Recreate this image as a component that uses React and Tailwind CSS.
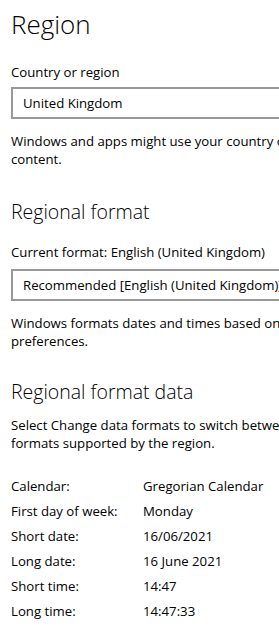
export default function App() {
  const rows = [
    ["Calendar:", "Gregorian Calendar"],
    ["First day of week:", "Monday"],
    ["Short date:", "16/06/2021"],
    ["Long date:", "16 June 2021"],
    ["Short time:", "14:47"],
    ["Long time:", "14:47:33"],
  ];

  return (
    <div
      className="h-[642px] w-[279px] overflow-hidden bg-white pl-[11px] text-[13.2px] leading-[18px] text-black"
      style={{ fontFamily: '"Open Sans", "Noto Sans", sans-serif' }}
    >
      <h1 className="pt-[5px] text-[26px] font-light leading-[38px]">Region</h1>

      <p className="mt-[20px] whitespace-nowrap">Country or region</p>
      <div className="mt-[6px] flex h-[32px] w-[320px] items-center border-2 border-[#999999] px-[10px]">
        United Kingdom
      </div>
      <p className="mt-[13px] whitespace-nowrap">
        Windows and apps might use your country or region to give you local
        <br />
        content.
      </p>

      <h2 className="mt-[30px] text-[19.5px] font-light leading-[27px]">Regional format</h2>
      <p className="mt-[18px] whitespace-nowrap">Current format: English (United Kingdom)</p>
      <div className="mt-[8px] flex h-[32px] w-[320px] items-center whitespace-nowrap border-2 border-[#999999] px-[10px]">
        Recommended [English (United Kingdom)]
      </div>
      <p className="mt-[13px] whitespace-nowrap">
        Windows formats dates and times based on your language and regional
        <br />
        preferences.
      </p>

      <h2 className="mt-[28px] text-[19.5px] font-light leading-[27px]">Regional format data</h2>
      <p className="mt-[11px] whitespace-nowrap">
        Select Change data formats to switch between calendars, date and time
        <br />
        formats supported by the region.
      </p>

      <div className="mt-[21px] flex flex-col">
        {rows.map(([label, value]) => (
          <div key={label} className="flex h-[25px] items-center whitespace-nowrap">
            <span className="w-[132px]">{label}</span>
            <span>{value}</span>
          </div>
        ))}
      </div>
    </div>
  );
}
